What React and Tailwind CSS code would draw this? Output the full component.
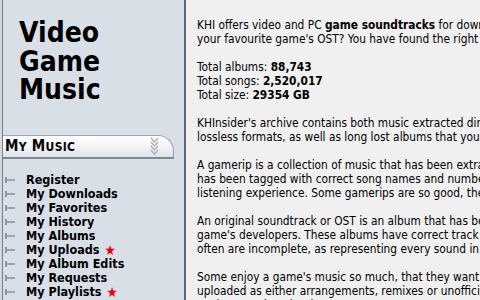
import React from 'react';

const menu = [
  { label: 'Register' },
  { label: 'My Downloads' },
  { label: 'My Favorites' },
  { label: 'My History' },
  { label: 'My Albums' },
  { label: 'My Uploads', star: true },
  { label: 'My Album Edits' },
  { label: 'My Requests' },
  { label: 'My Playlists', star: true },
  { label: 'My Rips', star: true },
];

const Bullet = () => (
  <svg width="10" height="6" viewBox="0 0 10 6" className="shrink-0">
    <rect x="0" y="0" width="2" height="6" fill="#8d99a5" />
    <rect x="2" y="2" width="8" height="2" fill="#9aa5b0" />
  </svg>
);

const Chevrons = () => (
  <svg width="9" height="20" viewBox="0 0 9 20">
    {[0, 4, 8, 12].map((y) => (
      <polyline key={y} points={`1,${y + 2} 4.5,${y + 6} 8,${y + 2}`} fill="none" stroke="#a8b1ba" strokeWidth="1.4" />
    ))}
  </svg>
);

export default function App() {
  const font = { fontFamily: '"DejaVu Sans Condensed", "DejaVu Sans", sans-serif' };
  return (
    <div className="flex w-[480px] h-[300px] overflow-hidden bg-[#f0f0f0] text-black" style={font}>
      {/* sidebar */}
      <div className="w-[186px] shrink-0 flex bg-[#d8dfe7] border-r-2 border-[#5c6773]">
        <div className="w-[2px] bg-[#d3d9e0]" />
        <div className="flex-1 border-l border-[#6e7f8f]">
          <div className="pt-[19px] pl-[16px] text-[28px] font-bold leading-[28.5px]">
            <div>Video</div>
            <div>Game</div>
            <div>Music</div>
          </div>

          <div className="mt-[30px] mr-[10px] h-[24px] flex items-center justify-between rounded-tr-[16px] border-t border-r border-[#9aa4ae] border-b-2 border-b-[#7b8895] bg-gradient-to-b from-white via-[#f2f4f6] to-[#dde2e7]">
            <span className="pl-[2px] text-[15px] font-bold tracking-[0.3px]">
              M<span className="text-[12px]">Y</span> M<span className="text-[12px]">USIC</span>
            </span>
            <span className="mr-[14px] flex"><Chevrons /></span>
          </div>

          <ul className="mt-[14px] text-[12.5px] font-bold leading-[14px]">
            {menu.map((m) => (
              <li key={m.label} className="flex items-center h-[14px] pl-[2px]">
                <Bullet />
                <span className="ml-[11px] whitespace-nowrap">{m.label}</span>
                {m.star && <span className="ml-[5px] text-[#f00000] text-[14px] leading-[14px]">★</span>}
              </li>
            ))}
          </ul>
        </div>
      </div>

      {/* main */}
      <div className="flex-1 min-w-0 pl-[11px] pt-[18px] text-[11.8px] leading-[14px] whitespace-nowrap">
        <p>KHI offers video and PC <b>game soundtracks</b> for download for free! Looking for</p>
        <p>your favourite game's OST? You have found the right place!</p>
        <p className="mt-[14px]">Total albums: <b>88,743</b></p>
        <p>Total songs: <b>2,520,017</b></p>
        <p>Total size: <b>29354 GB</b></p>
        <p className="mt-[14px]">KHInsider's archive contains both music extracted directly from games in</p>
        <p>lossless formats, as well as long lost albums that you can't find elsewhere.</p>
        <p className="mt-[14px]">A gamerip is a collection of music that has been extracted from a game. It</p>
        <p>has been tagged with correct song names and numbers to give you a better</p>
        <p>listening experience. Some gamerips are so good, they rival official releases.</p>
        <p className="mt-[14px]">An original soundtrack or OST is an album that has been released by the</p>
        <p>game's developers. These albums have correct track listings, but they</p>
        <p>often are incomplete, as representing every sound in a game is hard.</p>
        <p className="mt-[14px]">Some enjoy a game's music so much, that they want to add to it. These are</p>
        <p>uploaded as either arrangements, remixes or unofficial soundtracks, as long</p>
        <p>as they are done by the game's creators.</p>
      </div>
    </div>
  );
}
